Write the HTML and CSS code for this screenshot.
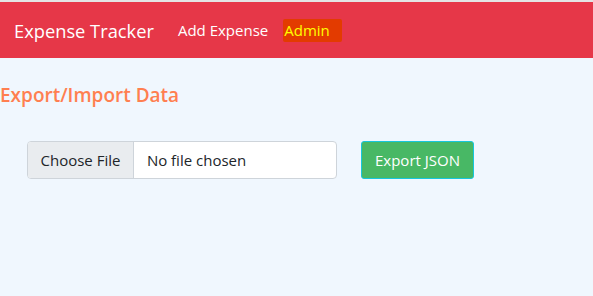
FILE: index.html
```html
<!DOCTYPE html>
<html lang="en">
<head>
    <meta charset="UTF-8">
    <meta name="viewport" content="width=device-width, initial-scale=1.0">
    <title>Expense Tracker</title>
    <link rel="stylesheet" href="styles.css">
</head>
<body>

    <nav class="navbar">
        <a class="brand" href="#">Expense Tracker</a>
        <a class="nav-link" href="#">Add Expense</a>
        <a class="nav-link admin" href="#">Admin</a>
    </nav>

    <div class="container">
        <h2 class="title">Export/Import Data</h2>

        <div class="data-row">
            <input type="file" class="file-input" accept=".json">
            <button class="btn-export">Export JSON</button>
        </div>
    </div>

</body>
</html>
```

FILE: styles.css
```css
body {
    font-family: "Open Sans", "Noto Sans", sans-serif;
    background-color: #f0f7fe;
    margin: 0;
    border-top: 2px solid #e4e4e4;
}

.navbar {
    display: flex;
    align-items: center;
    height: 56px;
    padding: 0 14px;
    background-color: #e63748;
}

.brand {
    color: white;
    font-size: 18.3px;
    text-decoration: none;
    margin-right: 24px;
}

.nav-link {
    color: white;
    font-size: 15px;
    text-decoration: none;
    margin-right: 15px;
}

.nav-link.admin {
    color: #ffff00;
    background-color: #e33b00;
    padding: 1px 12px 2px 1px;
    border-radius: 2px;
}

.container {
    padding: 0;
}

.title {
    color: #ff7f50;
    font-size: 19px;
    font-weight: 600;
    margin: 24px 0 0 0;
}

.data-row {
    display: flex;
    align-items: center;
    gap: 24px;
    margin-top: 33px;
    padding-left: 27px;
}

.file-input {
    width: 310px;
    height: 38px;
    box-sizing: border-box;
    background-color: #fff;
    border: 1px solid #ced4da;
    border-radius: 4px;
    font-family: inherit;
    font-size: 15px;
    color: #212529;
    padding: 0;
    overflow: hidden;
}

.file-input::file-selector-button {
    height: 36px;
    margin: 0 13px 0 0;
    padding: 0 12.5px;
    border: none;
    border-right: 1px solid #ced4da;
    background-color: #e9ecef;
    color: #212529;
    font-family: inherit;
    font-size: 15px;
}

.btn-export {
    height: 38px;
    padding: 0 13px;
    background-color: #48b865;
    color: white;
    border: 1px solid #17c6dc;
    border-radius: 3px;
    font-family: inherit;
    font-size: 15px;
    cursor: pointer;
}
```
